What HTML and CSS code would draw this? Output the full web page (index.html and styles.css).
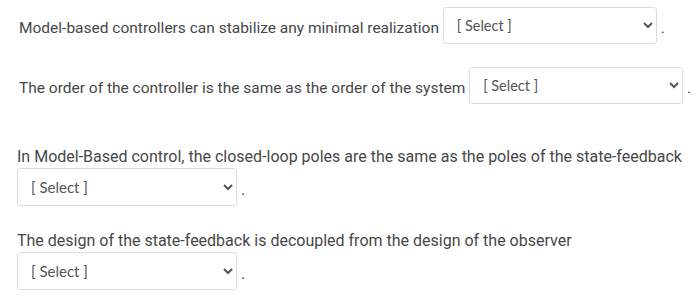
FILE: index.html
```html
<!doctype html>
<html lang="en">
<head>
  <meta charset="utf-8">
  <title>Quiz</title>
  <link rel="stylesheet" href="styles.css">
</head>
<body>
	<div class="quiz">
		<p class="q q1 small">Model-based controllers can stabilize any minimal realization <select class="pick"><option>[ Select ]</option></select> .</p>
		<p class="q q2 small">The order of the controller is the same as the order of the system <select class="pick"><option>[ Select ]</option></select> .</p>
		<p class="q q3">In Model-Based control, the closed-loop poles are the same as the poles of the state-feedback <select class="pick"><option>[ Select ]</option></select> .</p>
		<p class="q q4">The design of the state-feedback is decoupled from the design of the observer <select class="pick"><option>[ Select ]</option></select> .</p>
	</div>
</body>
</html>
```

FILE: styles.css
```css
html,body{
	margin:0; padding:0;
	background:#fff;
	font-family: Roboto, "Liberation Sans", sans-serif;
	color:#474747;
}
.quiz{ padding:0 4px 0 17px; }
.q{ margin:0; font-size:16px; line-height:22px; }
.q1{ padding-top:7px; }
.q2{ margin-top:23px; }
.q3{ margin-top:42px; }
.q4{ margin-top:24px; }

select.pick{
	font-family: Lato, "Liberation Sans", sans-serif;
	font-size:15px;
	color:#555;
	width:220px;
	height:38px;
	padding:0 8px 0 9px;
	border:1px solid #ddd;
	border-radius:3px;
	background:#fff;
	vertical-align:2px;
	margin:0;
}
select.pick:focus{ outline:none; }

/* top two questions are a touch smaller */
.q.small{ font-size:15.5px; padding-left:2px; }
.q.small select.pick{ width:214px; height:37px; font-size:14.5px; }
```
